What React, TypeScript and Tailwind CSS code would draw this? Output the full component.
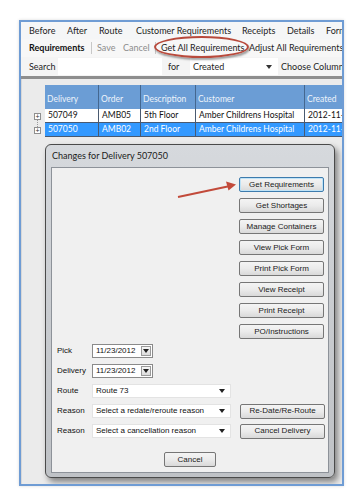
import React from "react";

const ui = { fontFamily: 'Lato, "Open Sans", sans-serif' };
const dlg = { fontFamily: '"Liberation Sans", Arial, sans-serif' };

function WinButton({ label, focus, w = "w-[85px]" }: { label: string; focus?: boolean; w?: string }) {
  return (
    <div
      className={`${w} h-[15px] flex items-center justify-center rounded-[2px] border text-[8px] text-[#1a1a1a] bg-gradient-to-b from-[#f4f4f4] via-[#ebebeb] to-[#d9d9d9] ${
        focus ? "border-[#3d7bad] shadow-[inset_0_0_0_1px_#bfe3f7]" : "border-[#767676]"
      }`}
      style={dlg}
    >
      {label}
    </div>
  );
}

function Arrow({ fill = "#222" }: { fill?: string }) {
  return (
    <svg width="6" height="4" viewBox="0 0 6 4">
      <path d="M0 0 L6 0 L3 4 Z" fill={fill} />
    </svg>
  );
}

function DateBox({ value }: { value: string }) {
  return (
    <div className="w-[61px] h-[14px] bg-white border border-[#8a8a8a] flex items-center pl-[3px] text-[8px] text-[#111]">
      <span className="flex-1">{value}</span>
      <div className="w-[10px] h-[10px] mr-[1px] border border-[#9a9a9a] bg-gradient-to-b from-[#f6f6f6] to-[#dcdcdc] flex items-center justify-center">
        <Arrow />
      </div>
    </div>
  );
}

function Combo({ value }: { value: string }) {
  return (
    <div className="w-[139px] h-[14px] bg-white border border-[#e3e3e3] flex items-center pl-[3px] pr-[5px] text-[8px] text-[#111]">
      <span className="flex-1">{value}</span>
      <Arrow />
    </div>
  );
}

function FormRow({ label, children, button }: { label: string; children: React.ReactNode; button?: string }) {
  return (
    <div className="flex items-center h-[14px]">
      <div className="w-[35px] pl-[5px] box-content text-[8px] text-[#111]">{label}</div>
      <div className="w-[148px]">{children}</div>
      {button && <WinButton label={button} />}
    </div>
  );
}

export default function App() {
  const cols = [
    { name: "Delivery", w: "w-[54px]" },
    { name: "Order", w: "w-[42px]" },
    { name: "Description", w: "w-[55px]" },
    { name: "Customer", w: "w-[109px]" },
    { name: "Created", w: "w-[60px]" },
  ];
  const rows = [
    ["507049", "AMB05", "5th Floor", "Amber Childrens Hospital", "2012-11-2"],
    ["507050", "AMB02", "2nd Floor", "Amber Childrens Hospital", "2012-11-2"],
  ];
  const buttons = [
    "Get Requirements",
    "Get Shortages",
    "Manage Containers",
    "View Pick Form",
    "Print Pick Form",
    "View Receipt",
    "Print Receipt",
    "PO/Instructions",
  ];

  return (
    <div className="w-[358px] h-[492px] bg-white pt-[20px] pl-[19px] overflow-hidden" style={ui}>
      <div className="w-[325px] h-[466px] border-2 border-[#6f9cd4] flex flex-col overflow-hidden bg-[#f2f2f2] shadow-[0_0_3px_rgba(0,0,0,0.15)]">
        {/* menu */}
        <div className="h-[17px] flex items-center pl-[8px] text-[9px] text-[#1e1e1e] bg-[#f5f6f7] whitespace-nowrap">
          <span className="w-[38px] shrink-0">Before</span>
          <span className="w-[32px] shrink-0">After</span>
          <span className="w-[37px] shrink-0">Route</span>
          <span className="w-[106px] shrink-0">Customer Requirements</span>
          <span className="w-[45px] shrink-0">Receipts</span>
          <span className="w-[39px] shrink-0">Details</span>
          <span>Forms</span>
        </div>
        {/* toolbar */}
        <div className="h-[18px] flex items-center pl-[8px] text-[9px] whitespace-nowrap bg-[#f7f7f7] relative">
          <span className="font-bold text-[#111] w-[62px] shrink-0">Requirements</span>
          <span className="w-px h-[12px] bg-[#c8c8c8] mr-[5px] shrink-0" />
          <span className="text-[#8c8c8c] w-[26px] shrink-0">Save</span>
          <span className="text-[#8c8c8c] w-[32px] shrink-0">Cancel</span>
          <span className="w-px h-[12px] bg-[#c8c8c8] mr-[5px] shrink-0" />
          <span className="text-[#1e1e1e] w-[88px] shrink-0">Get All Requirements</span>
          <span className="text-[#1e1e1e]">Adjust All Requirements</span>
          <div className="absolute left-[133px] top-[-3px] w-[95px] h-[22px] rounded-[50%] border-2 border-[#b84a3c] shadow-[1px_2px_2px_rgba(0,0,0,0.35)]" />
        </div>
        {/* search */}
        <div className="h-[19px] flex items-center text-[9px] text-[#1e1e1e] whitespace-nowrap bg-[#f4f4f4]">
          <span className="pl-[8px] w-[29px] box-content shrink-0">Search</span>
          <div className="w-[104px] h-[17px] bg-white shrink-0" />
          <span className="w-[22px] pl-[6px] box-content shrink-0">for</span>
          <div className="w-[88px] h-[17px] bg-white flex items-center pl-[3px] pr-[6px] shrink-0">
            <span className="flex-1">Created</span>
            <Arrow fill="#333" />
          </div>
          <span className="pl-[3px]">Choose Columns</span>
        </div>
        <div className="h-[3px] bg-[#8e8e8e]" />
        {/* content */}
        <div className="flex-1 relative bg-[#ebebeb] border-l border-[#d8d8d8] pt-[6px] overflow-hidden">
          <div className="flex flex-col text-[8.5px] whitespace-nowrap">
            <div className="flex">
              <div className="w-[23px] shrink-0" />
              {cols.map((c) => (
                <div
                  key={c.name}
                  className={`${c.w} shrink-0 h-[24px] bg-[#6b9dd5] border-r border-[#44678f] text-[#eef4fb] flex items-end pl-[2px] pb-[3px]`}
                >
                  {c.name}
                </div>
              ))}
            </div>
            {rows.map((r, i) => (
              <div key={i} className="flex">
                <div className="w-[23px] shrink-0 flex items-center justify-end pr-[4px] relative">
                  {i === 0 && (
                    <div className="absolute left-[15px] top-[10px] h-[10px] border-l border-dotted border-[#9a9a9a]" />
                  )}
                  <div className="relative w-[7px] h-[7px] border border-[#8f8f8f] bg-white flex items-center justify-center text-[7px] leading-none text-[#333]">
                    +
                  </div>
                </div>
                {r.map((v, j) => (
                  <div
                    key={j}
                    className={`${cols[j].w} shrink-0 h-[14px] border-r border-b border-[#4a5a70] flex items-center pl-[3px] overflow-hidden ${
                      i === 1 ? "bg-[#3399ff] text-white" : "bg-white text-[#111]"
                    }`}
                  >
                    {v}
                  </div>
                ))}
              </div>
            ))}
          </div>

          {/* modal dialog */}
          <div className="absolute left-[23px] top-[65px] w-[290px] h-[334px] rounded-[6px] border border-[#4a4a4a] bg-gradient-to-b from-[#d6d9dd] via-[#c9ccd0] to-[#bfc2c6] shadow-[3px_4px_6px_rgba(0,0,0,0.45)] flex flex-col px-[5px] pb-[4px]">
            <div className="h-[22px] flex items-center pl-[1px] text-[9px] text-[#1a1a1a]">
              Changes for Delivery 507050
            </div>
            <div className="flex-1 bg-[#f0f0f0] border border-[#8d9299] flex flex-col pt-[9px]" style={dlg}>
              <div className="flex flex-col items-end gap-[6px] pr-[4px]">
                {buttons.map((b, i) => (
                  <WinButton key={b} label={b} focus={i === 0} />
                ))}
              </div>
              <div className="flex flex-col gap-[6px] mt-[5px]">
                <FormRow label="Pick">
                  <DateBox value="11/23/2012" />
                </FormRow>
                <FormRow label="Delivery">
                  <DateBox value="11/23/2012" />
                </FormRow>
                <FormRow label="Route">
                  <Combo value="Route 73" />
                </FormRow>
                <FormRow label="Reason" button="Re-Date/Re-Route">
                  <Combo value="Select a redate/reroute reason" />
                </FormRow>
                <FormRow label="Reason" button="Cancel Delivery">
                  <Combo value="Select a cancellation reason" />
                </FormRow>
              </div>
              <div className="flex justify-center mt-[14px]">
                <WinButton label="Cancel" w="w-[52px]" />
              </div>
            </div>
          </div>

          {/* red arrow */}
          <svg className="absolute left-[150px] top-[99px]" width="70" height="26" viewBox="0 0 70 26">
            <line x1="6" y1="19" x2="58" y2="8" stroke="#c24a3a" strokeWidth="2" />
            <path d="M64 6.5 L54 3.5 L56.5 12.5 Z" fill="#c24a3a" />
          </svg>
        </div>
      </div>
    </div>
  );
}
